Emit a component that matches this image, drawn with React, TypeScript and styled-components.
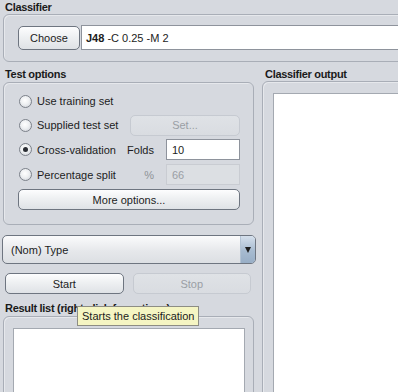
import React from "react";
import styled, { createGlobalStyle } from "styled-components";

const GlobalStyle = createGlobalStyle`
  html, body {
    margin: 0;
    padding: 0;
    background: #d6d9df;
    overflow: hidden;
  }
  body {
    font-family: "Liberation Sans", Arial, sans-serif;
    font-size: 11px;
    color: #1c1c1c;
  }
`;

const Page = styled.div`
  position: relative;
  width: 398px;
  height: 392px;
  padding-top: 1px;
  box-sizing: border-box;
  overflow: hidden;
  background: #d6d9df;
`;

const Title = styled.div<{ $indent?: number }>`
  height: 13px;
  line-height: 13px;
  font-weight: bold;
  font-size: 11px;
  letter-spacing: -0.3px;
  padding-left: ${(p) => p.$indent ?? 5}px;
  white-space: nowrap;
  color: #1a1a1a;
`;

const Frame = styled.div`
  border: 1px solid #a9aeb7;
  border-radius: 6px;
  box-shadow: inset 1px 1px 0 #e6e8ec;
  box-sizing: border-box;
`;

const ClassifierFrame = styled(Frame)`
  margin-left: 3px;
  width: 420px;
  height: 48px;
  padding: 11px 0 0 14px;
  display: flex;
  align-items: flex-start;
`;

const Btn = styled.div<{ $disabled?: boolean; $w?: number; $h?: number }>`
  box-sizing: border-box;
  width: ${(p) => (p.$w ? `${p.$w}px` : "auto")};
  height: ${(p) => p.$h ?? 21}px;
  border: 1px solid ${(p) => (p.$disabled ? "#c6cad1" : "#6e7580")};
  border-radius: 5px;
  background: ${(p) =>
    p.$disabled
      ? "linear-gradient(#dfe2e6, #d9dce1)"
      : "linear-gradient(#fdfdfe 0%, #eef0f2 45%, #dfe2e6 100%)"};
  color: ${(p) => (p.$disabled ? "#9a9ea5" : "#1c1c1c")};
  display: flex;
  align-items: center;
  justify-content: center;
  white-space: nowrap;
`;

const TextField = styled.div<{ $disabled?: boolean; $h?: number }>`
  box-sizing: border-box;
  height: ${(p) => p.$h ?? 21}px;
  border: 1px solid ${(p) => (p.$disabled ? "#c9ccd2" : "#8e939c")};
  background: ${(p) => (p.$disabled ? "#dcdfe3" : "#ffffff")};
  color: ${(p) => (p.$disabled ? "#9a9ea5" : "#1c1c1c")};
  padding-left: 6px;
  display: flex;
  align-items: center;
  white-space: nowrap;
`;

const SchemeField = styled(TextField)`
  flex: 1;
  margin-top: -1px;
  margin-left: 1px;
  padding-left: 4px;
`;

const Main = styled.div`
  display: flex;
  margin-top: 6px;
  gap: 5px;
`;

const LeftColumn = styled.div`
  width: 257px;
  flex-shrink: 0;
  display: flex;
  flex-direction: column;
`;

const OptionsFrame = styled(Frame)`
  margin: 1px 3px 0 3px;
  padding: 8px 13px 14px 14px;
  display: grid;
  grid-template-columns: 109px 27px 86px;
  grid-template-rows: 20px 20px 21px 21px 21px;
  row-gap: 4px;
  align-items: center;
`;

const Radio = styled.div`
  display: flex;
  align-items: center;
  gap: 5px;
  white-space: nowrap;
`;

const RadioDot = styled.span<{ $checked?: boolean }>`
  width: 13px;
  height: 13px;
  box-sizing: border-box;
  border-radius: 50%;
  border: 1px solid #7c818a;
  background: radial-gradient(circle at 45% 40%, #ffffff 0%, #eef0f2 45%, #c9cdd4 100%);
  display: flex;
  align-items: center;
  justify-content: center;
  margin-left: 1px;
  &::after {
    content: "";
    display: ${(p) => (p.$checked ? "block" : "none")};
    width: 5px;
    height: 5px;
    border-radius: 50%;
    background: #2a2d33;
  }
`;

const FieldLabel = styled.div<{ $disabled?: boolean }>`
  text-align: right;
  color: ${(p) => (p.$disabled ? "#8f9398" : "#1c1c1c")};
`;

const OptionField = styled(TextField)`
  margin-left: 12px;
  padding-left: 5px;
`;

const SetBtn = styled(Btn)`
  grid-column: 2 / 4;
  margin-left: 3px;
`;

const MoreBtn = styled(Btn)`
  grid-column: 1 / 4;
`;

const Combo = styled.div`
  margin: 10px 1px 0 2px;
  height: 29px;
  box-sizing: border-box;
  border: 1px solid #6e7580;
  border-radius: 5px;
  background: linear-gradient(#fbfbfc, #e6e8eb 55%, #dcdfe3);
  display: flex;
  overflow: hidden;
`;

const ComboText = styled.div`
  flex: 1;
  display: flex;
  align-items: center;
  padding-left: 8px;
`;

const ComboArrow = styled.div`
  width: 14px;
  background: linear-gradient(#d5e0ec, #a7bbd0 55%, #98aec6);
  border-left: 1px solid #b3c3d4;
  display: flex;
  align-items: center;
  justify-content: center;
  &::after {
    content: "";
    border-left: 3px solid transparent;
    border-right: 3px solid transparent;
    border-top: 6px solid #1e1e1e;
  }
`;

const ButtonRow = styled.div`
  margin-top: 9px;
  padding: 0 6px 0 5px;
  display: grid;
  grid-template-columns: 1fr 1fr;
  column-gap: 9px;
`;

const ResultTitle = styled(Title)`
  margin-top: 8px;
`;

const ResultFrame = styled(Frame)`
  margin: 1px 3px 0 3px;
  padding: 11px 8px 0 9px;
  height: 120px;
`;

const WhiteArea = styled.div`
  background: #ffffff;
  border: 1px solid #a4a9b1;
  border-bottom: none;
  height: 100%;
  box-sizing: border-box;
`;

const RightColumn = styled.div`
  width: 200px;
  flex-shrink: 0;
  display: flex;
  flex-direction: column;
`;

const OutputFrame = styled(Frame)`
  padding: 11px 0 0 10px;
  height: 330px;
`;

const Tooltip = styled.div`
  position: absolute;
  left: 77px;
  top: 306px;
  height: 20px;
  padding: 0 3px 0 4px;
  box-sizing: border-box;
  background: #f5f5c3;
  border: 1px solid #8d8d84;
  display: flex;
  align-items: center;
  color: #1c1c1c;
  white-space: nowrap;
`;

export default function App() {
  return (
    <Page>
      <GlobalStyle />
      <Title>Classifier</Title>
      <ClassifierFrame>
        <Btn $w={62} $h={24}>Choose</Btn>
        <SchemeField $h={25}>
          <b>J48</b>&nbsp;-C 0.25 -M 2
        </SchemeField>
      </ClassifierFrame>

      <Main>
        <LeftColumn>
          <Title>Test options</Title>
          <OptionsFrame>
            <Radio>
              <RadioDot />
              Use training set
            </Radio>
            <span />
            <span />

            <Radio>
              <RadioDot />
              Supplied test set
            </Radio>
            <SetBtn $disabled>Set...</SetBtn>

            <Radio>
              <RadioDot $checked />
              Cross-validation
            </Radio>
            <FieldLabel>Folds</FieldLabel>
            <OptionField>10</OptionField>

            <Radio>
              <RadioDot />
              Percentage split
            </Radio>
            <FieldLabel $disabled>%</FieldLabel>
            <OptionField $disabled>66</OptionField>

            <MoreBtn>More options...</MoreBtn>
          </OptionsFrame>

          <Combo>
            <ComboText>(Nom) Type</ComboText>
            <ComboArrow />
          </Combo>

          <ButtonRow>
            <Btn>Start</Btn>
            <Btn $disabled>Stop</Btn>
          </ButtonRow>

          <ResultTitle>Result list (right-click for options)</ResultTitle>
          <ResultFrame>
            <WhiteArea />
          </ResultFrame>
        </LeftColumn>

        <RightColumn>
          <Title $indent={3}>Classifier output</Title>
          <OutputFrame>
            <WhiteArea />
          </OutputFrame>
        </RightColumn>
      </Main>

      <Tooltip>Starts the classification</Tooltip>
    </Page>
  );
}
